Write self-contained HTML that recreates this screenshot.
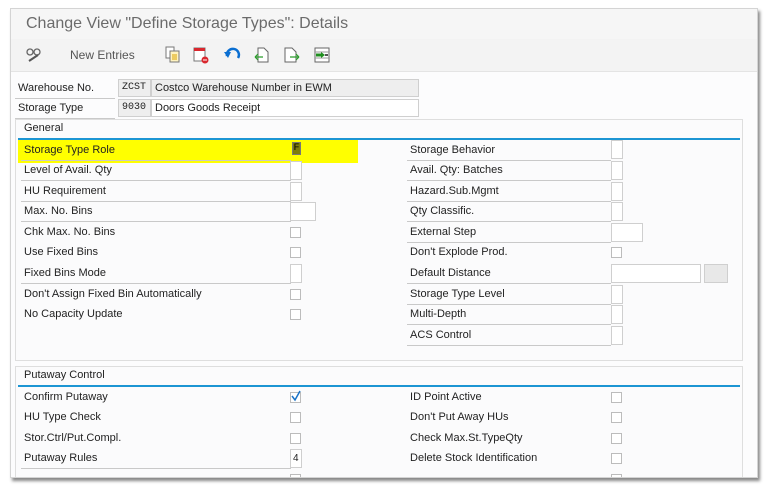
<!DOCTYPE html>
<html><head><meta charset="utf-8"><style>
body{margin:0;width:768px;height:486px;background:#fff;position:relative;overflow:hidden;font-family:"Liberation Sans",Tahoma,sans-serif;font-size:11px;color:#222}
.a{position:absolute}
#win{left:10px;top:8px;width:746px;height:468px;background:#fcfcfd;border:1px solid #d4d4d4;box-shadow:2px 3px 3px #888;overflow:hidden}
.lbl{position:absolute;height:19px;line-height:18px;white-space:nowrap}
.ul{border-bottom:1px solid #c9c9c9}
.box{position:absolute;background:#fff;border:1px solid #cfcfcf;box-sizing:border-box}
.cb{position:absolute;width:11px;height:11px;border:1px solid #bcbcbc;background:#fff;box-sizing:border-box}
.grp{position:absolute;border:1px solid #dedede;background:#fbfbfc}
.gh{position:absolute;left:2px;right:2px;height:18px;border-bottom:2px solid #1c95d3;padding-left:6px;line-height:17px}
</style></head><body>
<div id="win" class="a">
<div class="a" style="left:0;top:0;width:746px;height:30px;background:#f6f6f6"></div>
<div class="a" style="left:15px;top:6px;font-size:16px;color:#6b6b6b">Change View "Define Storage Types": Details</div>
<div class="a" style="left:0;top:30px;width:746px;height:32px;background:#f3f3f3;border-bottom:1px solid #e4e4e4"></div>
<!-- toolbar icons -->
<svg class="a" style="left:14px;top:37px" width="18" height="18" viewBox="0 0 18 18"><circle cx="5" cy="6" r="3" fill="none" stroke="#666" stroke-width="1.3"/><circle cx="12" cy="6" r="3" fill="none" stroke="#666" stroke-width="1.3"/><path d="M4 15 L13 9" stroke="#555" stroke-width="2"/></svg>
<div class="a" style="left:59px;top:39px;font-size:12px;color:#555">New Entries</div>
<svg class="a" style="left:153px;top:37px" width="18" height="18"><rect x="2" y="1" width="8" height="11" fill="#fff" stroke="#777"/><rect x="6" y="5" width="9" height="11" fill="#fff3c0" stroke="#777"/><path d="M8 9h5M8 11h5M8 13h5" stroke="#d9a300"/></svg>
<svg class="a" style="left:181px;top:37px" width="18" height="18"><rect x="2" y="2" width="11" height="13" fill="#fff" stroke="#777"/><rect x="2" y="2" width="11" height="3" fill="#d9272e"/><circle cx="13" cy="14" r="3.5" fill="#d9272e"/><path d="M11 14h4" stroke="#fff"/></svg>
<svg class="a" style="left:212px;top:37px" width="18" height="18"><path d="M4 10 A6 6 0 1 1 15 12" fill="none" stroke="#0a6ed1" stroke-width="2.5"/><path d="M1 6 L5 12 L8 6Z" fill="#0a6ed1"/></svg>
<svg class="a" style="left:242px;top:37px" width="18" height="18"><path d="M5 2h6l4 4v10H5z" fill="#fff" stroke="#666"/><path d="M2 11h8M2 11l3-3M2 11l3 3" stroke="#2a9d2a" stroke-width="1.2" fill="none"/></svg>
<svg class="a" style="left:272px;top:37px" width="18" height="18"><path d="M2 2h7l4 4v10H2z" fill="#fff" stroke="#666"/><path d="M7 11h9M16 11l-3-3M16 11l-3 3" stroke="#2a9d2a" stroke-width="1.2" fill="none"/></svg>
<svg class="a" style="left:302px;top:37px" width="18" height="18"><rect x="2" y="2" width="14" height="14" fill="#fff" stroke="#666"/><path d="M2 6h14M2 12h14" stroke="#999"/><path d="M3 9h6" stroke="#1e8f1e" stroke-width="3"/><path d="M8 6l4 3-4 3z" fill="#1e8f1e"/><rect x="12" y="8" width="3" height="2" fill="#555"/></svg>

<!-- header fields -->
<div class="lbl ul" style="left:4px;top:70px;width:100px">&nbsp;Warehouse No.</div>
<div class="box" style="left:107px;top:70px;width:33px;height:18px;background:#eee;font-family:'Liberation Mono',monospace;font-size:10px;line-height:16px;padding-left:3px">ZCST</div>
<div class="box" style="left:140px;top:70px;width:268px;height:18px;background:#eee;line-height:16px;padding-left:3px">Costco Warehouse Number in EWM</div>
<div class="lbl ul" style="left:4px;top:90px;width:100px">&nbsp;Storage Type</div>
<div class="box" style="left:107px;top:90px;width:33px;height:18px;background:#eee;font-family:'Liberation Mono',monospace;font-size:10px;line-height:16px;padding-left:3px">9030</div>
<div class="box" style="left:140px;top:90px;width:268px;height:18px;line-height:16px;padding-left:3px">Doors Goods Receipt</div>

<!-- General -->
<div class="grp" style="left:4px;top:110px;width:726px;height:240px">
<div class="gh" style="top:0">General</div>
</div>
<div class="a" style="left:7px;top:131px;width:340px;height:23px;background:#ffff00"></div>
<div class="lbl ul" style="left:10px;top:132px;width:270px">&nbsp;Storage Type Role</div>
<div class="box" style="left:281px;top:133px;width:9px;height:13px;background:#7d7d0a;border-color:#777;font-family:'Liberation Mono',monospace;font-size:10px;line-height:12px;color:#000;text-align:center">F</div>
<div class="lbl ul" style="left:10px;top:152px;width:270px">&nbsp;Level of Avail. Qty</div><div class="box" style="left:279px;top:152px;width:12px;height:19px"></div>
<div class="lbl ul" style="left:10px;top:173px;width:270px">&nbsp;HU Requirement</div><div class="box" style="left:279px;top:173px;width:12px;height:19px"></div>
<div class="lbl ul" style="left:10px;top:193px;width:270px">&nbsp;Max. No. Bins</div><div class="box" style="left:279px;top:193px;width:26px;height:19px"></div>
<div class="lbl" style="left:10px;top:214px">&nbsp;Chk Max. No. Bins</div><div class="cb" style="left:279px;top:218px"></div>
<div class="lbl" style="left:10px;top:234px">&nbsp;Use Fixed Bins</div><div class="cb" style="left:279px;top:238px"></div>
<div class="lbl ul" style="left:10px;top:255px;width:270px">&nbsp;Fixed Bins Mode</div><div class="box" style="left:279px;top:255px;width:12px;height:19px"></div>
<div class="lbl" style="left:10px;top:276px">&nbsp;Don't Assign Fixed Bin Automatically</div><div class="cb" style="left:279px;top:280px"></div>
<div class="lbl" style="left:10px;top:296px">&nbsp;No Capacity Update</div><div class="cb" style="left:279px;top:300px"></div>

<div class="lbl ul" style="left:396px;top:132px;width:204px">&nbsp;Storage Behavior</div><div class="box" style="left:600px;top:131px;width:12px;height:19px"></div>
<div class="lbl ul" style="left:396px;top:152px;width:204px">&nbsp;Avail. Qty: Batches</div><div class="box" style="left:600px;top:152px;width:12px;height:19px"></div>
<div class="lbl ul" style="left:396px;top:173px;width:204px">&nbsp;Hazard.Sub.Mgmt</div><div class="box" style="left:600px;top:173px;width:12px;height:19px"></div>
<div class="lbl ul" style="left:396px;top:193px;width:204px">&nbsp;Qty Classific.</div><div class="box" style="left:600px;top:193px;width:12px;height:19px"></div>
<div class="lbl ul" style="left:396px;top:214px;width:204px">&nbsp;External Step</div><div class="box" style="left:600px;top:214px;width:32px;height:19px"></div>
<div class="lbl" style="left:396px;top:234px">&nbsp;Don't Explode Prod.</div><div class="cb" style="left:600px;top:238px"></div>
<div class="lbl ul" style="left:396px;top:255px;width:204px">&nbsp;Default Distance</div><div class="box" style="left:600px;top:255px;width:90px;height:19px"></div><div class="box" style="left:693px;top:255px;width:24px;height:19px;background:#e8e8e8"></div>
<div class="lbl ul" style="left:396px;top:276px;width:204px">&nbsp;Storage Type Level</div><div class="box" style="left:600px;top:276px;width:12px;height:19px"></div>
<div class="lbl ul" style="left:396px;top:296px;width:204px">&nbsp;Multi-Depth</div><div class="box" style="left:600px;top:296px;width:12px;height:19px"></div>
<div class="lbl ul" style="left:396px;top:317px;width:204px">&nbsp;ACS Control</div><div class="box" style="left:600px;top:317px;width:12px;height:19px"></div>

<!-- Putaway -->
<div class="grp" style="left:4px;top:357px;width:726px;height:130px">
<div class="gh" style="top:0">Putaway Control</div>
</div>
<div class="lbl" style="left:10px;top:379px">&nbsp;Confirm Putaway</div><div class="cb" style="left:279px;top:383px"></div>
<svg class="a" style="left:279px;top:381px" width="12" height="12"><path d="M2 6l3 4 5-9" fill="none" stroke="#1a73c7" stroke-width="1.5"/></svg>
<div class="lbl" style="left:10px;top:399px">&nbsp;HU Type Check</div><div class="cb" style="left:279px;top:403px"></div>
<div class="lbl" style="left:10px;top:420px">&nbsp;Stor.Ctrl/Put.Compl.</div><div class="cb" style="left:279px;top:424px"></div>
<div class="lbl ul" style="left:10px;top:440px;width:270px">&nbsp;Putaway Rules</div><div class="box" style="left:279px;top:440px;width:12px;height:19px;font-size:10px;line-height:17px;padding-left:2px">4</div>
<div class="cb" style="left:279px;top:465px"></div>
<div class="lbl" style="left:396px;top:379px">&nbsp;ID Point Active</div><div class="cb" style="left:600px;top:383px"></div>
<div class="lbl" style="left:396px;top:399px">&nbsp;Don't Put Away HUs</div><div class="cb" style="left:600px;top:403px"></div>
<div class="lbl" style="left:396px;top:420px">&nbsp;Check Max.St.TypeQty</div><div class="cb" style="left:600px;top:424px"></div>
<div class="lbl" style="left:396px;top:440px">&nbsp;Delete Stock Identification</div><div class="cb" style="left:600px;top:444px"></div>
<div class="cb" style="left:600px;top:465px"></div>
</div>
</body></html>
